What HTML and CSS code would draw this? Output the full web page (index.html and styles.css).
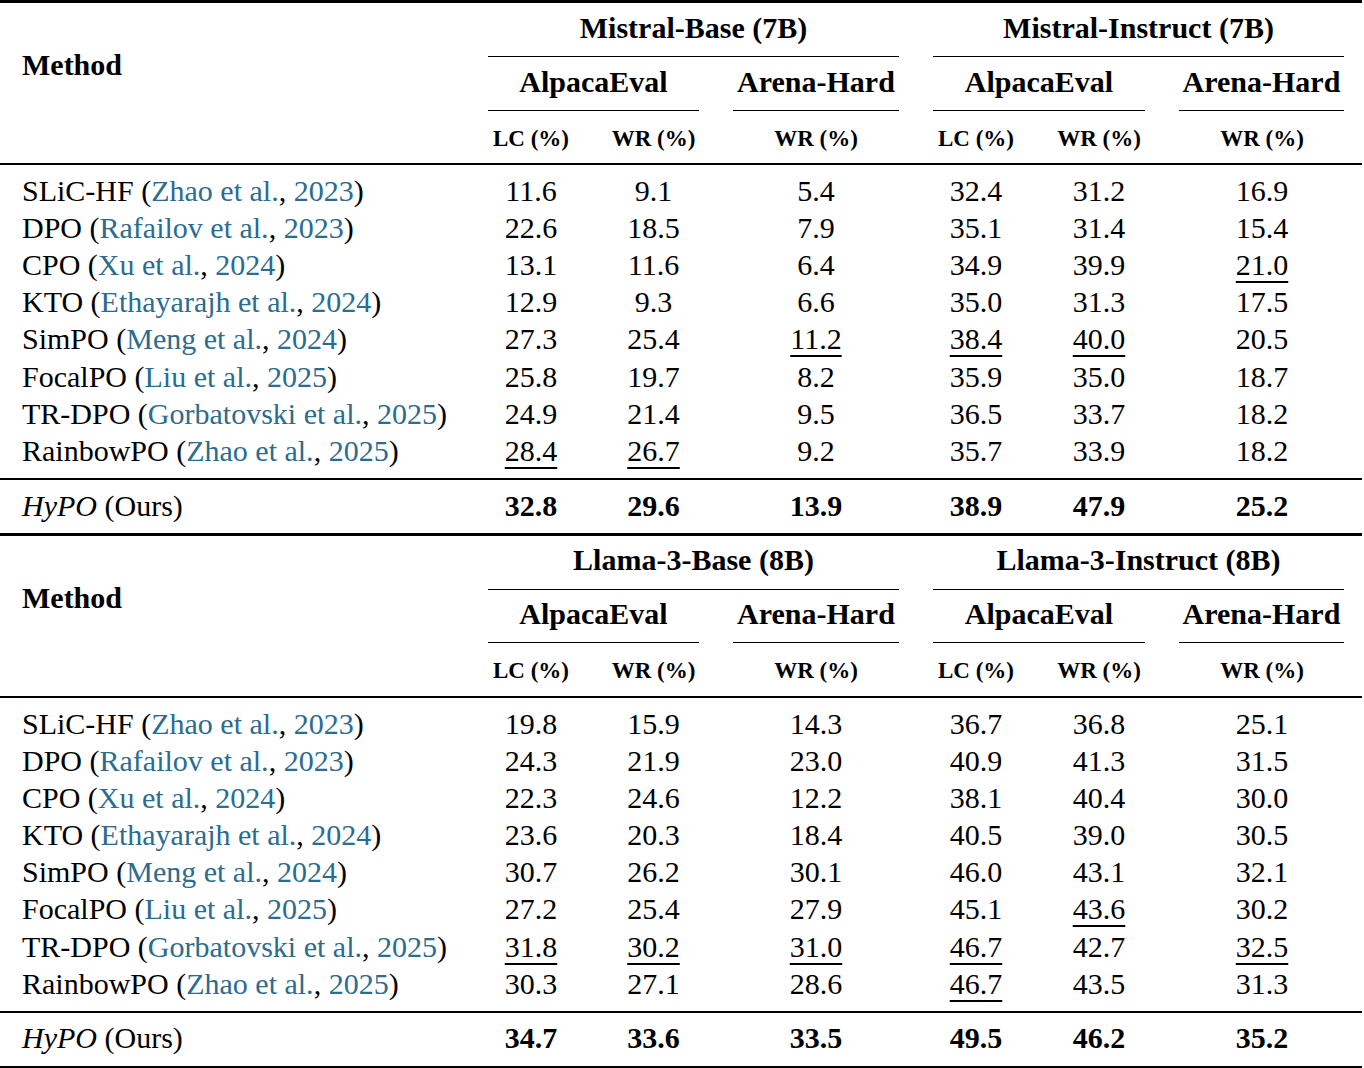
FILE: index.html
```html
<!DOCTYPE html>
<html>
<head>
<meta charset="utf-8">
<link rel="stylesheet" href="styles.css">
</head>
<body>
<div class="page">
  <section class="tbl">
    <div class="head cols">
      <div class="method">Method</div>
      <div class="grp g1">Mistral-Base (7B)</div>
      <div class="grp g2">Mistral-Instruct (7B)</div>
      <div class="sub s1">AlpacaEval</div>
      <div class="sub s2">Arena-Hard</div>
      <div class="sub s3">AlpacaEval</div>
      <div class="sub s4">Arena-Hard</div>
      <div class="met">LC (%)</div>
      <div class="met">WR (%)</div>
      <div class="met">WR (%)</div>
      <div class="met">LC (%)</div>
      <div class="met">WR (%)</div>
      <div class="met">WR (%)</div>
    </div>
    <div class="body">
      <div class="row cols"><div class="name">SLiC-HF (<span class="cite">Zhao et al.</span>, <span class="cite">2023</span>)</div><div>11.6</div><div>9.1</div><div>5.4</div><div>32.4</div><div>31.2</div><div>16.9</div></div>
      <div class="row cols"><div class="name">DPO (<span class="cite">Rafailov et al.</span>, <span class="cite">2023</span>)</div><div>22.6</div><div>18.5</div><div>7.9</div><div>35.1</div><div>31.4</div><div>15.4</div></div>
      <div class="row cols"><div class="name">CPO (<span class="cite">Xu et al.</span>, <span class="cite">2024</span>)</div><div>13.1</div><div>11.6</div><div>6.4</div><div>34.9</div><div>39.9</div><div><u>21.0</u></div></div>
      <div class="row cols"><div class="name">KTO (<span class="cite">Ethayarajh et al.</span>, <span class="cite">2024</span>)</div><div>12.9</div><div>9.3</div><div>6.6</div><div>35.0</div><div>31.3</div><div>17.5</div></div>
      <div class="row cols"><div class="name">SimPO (<span class="cite">Meng et al.</span>, <span class="cite">2024</span>)</div><div>27.3</div><div>25.4</div><div><u>11.2</u></div><div><u>38.4</u></div><div><u>40.0</u></div><div>20.5</div></div>
      <div class="row cols"><div class="name">FocalPO (<span class="cite">Liu et al.</span>, <span class="cite">2025</span>)</div><div>25.8</div><div>19.7</div><div>8.2</div><div>35.9</div><div>35.0</div><div>18.7</div></div>
      <div class="row cols"><div class="name">TR-DPO (<span class="cite">Gorbatovski et al.</span>, <span class="cite">2025</span>)</div><div>24.9</div><div>21.4</div><div>9.5</div><div>36.5</div><div>33.7</div><div>18.2</div></div>
      <div class="row cols"><div class="name">RainbowPO (<span class="cite">Zhao et al.</span>, <span class="cite">2025</span>)</div><div><u>28.4</u></div><div><u>26.7</u></div><div>9.2</div><div>35.7</div><div>33.9</div><div>18.2</div></div>
    </div>
    <div class="ours cols"><div class="name"><i>HyPO</i> (Ours)</div><div>32.8</div><div>29.6</div><div>13.9</div><div>38.9</div><div>47.9</div><div>25.2</div></div>
  </section>
  <section class="tbl last">
    <div class="head cols">
      <div class="method">Method</div>
      <div class="grp g1">Llama-3-Base (8B)</div>
      <div class="grp g2">Llama-3-Instruct (8B)</div>
      <div class="sub s1">AlpacaEval</div>
      <div class="sub s2">Arena-Hard</div>
      <div class="sub s3">AlpacaEval</div>
      <div class="sub s4">Arena-Hard</div>
      <div class="met">LC (%)</div>
      <div class="met">WR (%)</div>
      <div class="met">WR (%)</div>
      <div class="met">LC (%)</div>
      <div class="met">WR (%)</div>
      <div class="met">WR (%)</div>
    </div>
    <div class="body">
      <div class="row cols"><div class="name">SLiC-HF (<span class="cite">Zhao et al.</span>, <span class="cite">2023</span>)</div><div>19.8</div><div>15.9</div><div>14.3</div><div>36.7</div><div>36.8</div><div>25.1</div></div>
      <div class="row cols"><div class="name">DPO (<span class="cite">Rafailov et al.</span>, <span class="cite">2023</span>)</div><div>24.3</div><div>21.9</div><div>23.0</div><div>40.9</div><div>41.3</div><div>31.5</div></div>
      <div class="row cols"><div class="name">CPO (<span class="cite">Xu et al.</span>, <span class="cite">2024</span>)</div><div>22.3</div><div>24.6</div><div>12.2</div><div>38.1</div><div>40.4</div><div>30.0</div></div>
      <div class="row cols"><div class="name">KTO (<span class="cite">Ethayarajh et al.</span>, <span class="cite">2024</span>)</div><div>23.6</div><div>20.3</div><div>18.4</div><div>40.5</div><div>39.0</div><div>30.5</div></div>
      <div class="row cols"><div class="name">SimPO (<span class="cite">Meng et al.</span>, <span class="cite">2024</span>)</div><div>30.7</div><div>26.2</div><div>30.1</div><div>46.0</div><div>43.1</div><div>32.1</div></div>
      <div class="row cols"><div class="name">FocalPO (<span class="cite">Liu et al.</span>, <span class="cite">2025</span>)</div><div>27.2</div><div>25.4</div><div>27.9</div><div>45.1</div><div><u>43.6</u></div><div>30.2</div></div>
      <div class="row cols"><div class="name">TR-DPO (<span class="cite">Gorbatovski et al.</span>, <span class="cite">2025</span>)</div><div><u>31.8</u></div><div><u>30.2</u></div><div><u>31.0</u></div><div><u>46.7</u></div><div>42.7</div><div><u>32.5</u></div></div>
      <div class="row cols"><div class="name">RainbowPO (<span class="cite">Zhao et al.</span>, <span class="cite">2025</span>)</div><div>30.3</div><div>27.1</div><div>28.6</div><div><u>46.7</u></div><div>43.5</div><div>31.3</div></div>
    </div>
    <div class="ours cols"><div class="name"><i>HyPO</i> (Ours)</div><div>34.7</div><div>33.6</div><div>33.5</div><div>49.5</div><div>46.2</div><div>35.2</div></div>
  </section>
</div>
</body>
</html>
```

FILE: styles.css
```css
html, body {
  margin: 0;
  padding: 0;
  background: #ffffff;
}

body {
  font-family: "Liberation Serif", "Times New Roman", serif;
  color: #000;
  font-size: 30px;
}

.page {
  width: 1362px;
}

.cols {
  display: grid;
  grid-template-columns: 471px 120px 125px 200px 120px 126px 200px;
}

.tbl {
  border-top: 3px solid #000;
}

.tbl.last {
  border-bottom: 3px solid #000;
}

.head {
  grid-template-rows: 54px 53.5px 52.8px;
  border-bottom: 2px solid #000;
  font-weight: bold;
  line-height: 30px;
}

.method {
  grid-column: 1;
  grid-row: 1 / 4;
  padding: 47px 0 0 22px;
}

.grp {
  grid-row: 1;
  margin: 0 17px 0 17px;
  border-bottom: 1.2px solid #000;
  text-align: center;
  padding-top: 9.6px;
}

.g1 { grid-column: 2 / 5; }
.g2 { grid-column: 5 / 8; margin-right: 18px; }

.sub {
  grid-row: 2;
  margin: 0 17px;
  border-bottom: 1.2px solid #000;
  text-align: center;
  padding-top: 9.6px;
}

.s1 { grid-column: 2 / 4; }
.s2 { grid-column: 4 / 5; }
.s3 { grid-column: 5 / 7; }
.s4 { grid-column: 7 / 8; margin-right: 18px; }

.met {
  grid-row: 3;
  font-size: 23px;
  line-height: 23px;
  text-align: center;
  padding-top: 16px;
}

.body {
  padding: 6.6px 0 9.2px 0;
  border-bottom: 2px solid #000;
}

.row {
  height: 37.15px;
  line-height: 37.15px;
}

.row > div,
.ours > div {
  text-align: center;
  white-space: nowrap;
}

.row > .name,
.ours > .name {
  text-align: left;
  padding-left: 22px;
}

.cite {
  color: #2b6c8f;
}

u {
  text-decoration: underline;
  text-decoration-thickness: 1.5px;
  text-underline-offset: 6px;
}

.ours {
  height: 52.7px;
  box-sizing: border-box;
  padding-top: 10.4px;
  line-height: 30px;
}

.ours > div:not(.name) {
  font-weight: bold;
}
```
